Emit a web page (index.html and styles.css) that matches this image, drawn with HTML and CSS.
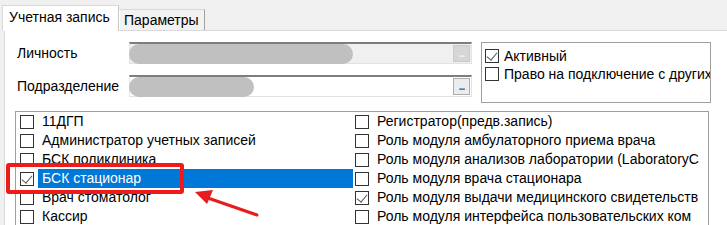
FILE: index.html
```html
<!DOCTYPE html>
<html lang="ru">
<head>
<meta charset="utf-8">
<link rel="stylesheet" href="styles.css">
</head>
<body>
<div class="window">
  <div class="tabs">
    <div class="tab active">Учетная запись</div>
    <div class="tab">Параметры</div>
  </div>
  <div class="panel">
    <div class="top">
      <div class="fields">
        <div class="field-row">
          <span class="label">Личность</span>
          <div class="input disabled">
            <span class="blur" style="width:224px"></span>
            <span class="btn">...</span>
          </div>
        </div>
        <div class="field-row">
          <span class="label">Подразделение</span>
          <div class="input">
            <span class="blur" style="width:125px"></span>
            <span class="btn">...</span>
          </div>
        </div>
      </div>
      <div class="group">
        <div class="check-row"><span class="cb checked"></span><span>Активный</span></div>
        <div class="check-row"><span class="cb"></span><span>Право на подключение с других</span></div>
      </div>
    </div>
    <div class="list">
      <div class="col col1">
        <div class="item"><span class="cb"></span><span class="txt">11ДГП</span></div>
        <div class="item"><span class="cb"></span><span class="txt">Администратор учетных записей</span></div>
        <div class="item"><span class="cb"></span><span class="txt">БСК поликлиника</span></div>
        <div class="item selected"><span class="cb checked"></span><span class="txt">БСК стационар</span></div>
        <div class="item"><span class="cb"></span><span class="txt">Врач стоматолог</span></div>
        <div class="item"><span class="cb"></span><span class="txt">Кассир</span></div>
      </div>
      <div class="col col2">
        <div class="item"><span class="cb"></span><span class="txt">Регистратор(предв.запись)</span></div>
        <div class="item"><span class="cb"></span><span class="txt">Роль модуля амбулаторного приема врача</span></div>
        <div class="item"><span class="cb"></span><span class="txt">Роль модуля анализов лаборатории (LaboratoryC</span></div>
        <div class="item"><span class="cb"></span><span class="txt">Роль модуля врача стационара</span></div>
        <div class="item"><span class="cb checked"></span><span class="txt">Роль модуля выдачи медицинского свидетельств</span></div>
        <div class="item"><span class="cb"></span><span class="txt">Роль модуля интерфейса пользовательских ком</span></div>
      </div>
    </div>
  </div>
  <div class="highlight-box"></div>
  <svg class="arrow" width="90" height="40" viewBox="0 0 90 40">
    <line x1="14" y1="11" x2="66" y2="29" stroke="#e81c1c" stroke-width="3" stroke-linecap="round"/>
    <polygon points="4,6 22,4 16,18" fill="#e81c1c"/>
  </svg>
</div>
</body>
</html>
```
FILE: styles.css
```css
* { box-sizing: border-box; }
html, body { margin: 0; padding: 0; }
body {
  background: #f0f0f0;
  font-family: "Liberation Sans", Arial, sans-serif;
  font-size: 14px;
  color: #000;
  width: 727px;
  height: 225px;
  overflow: hidden;
}
.window { position: relative; height: 225px; }
.tabs {
  display: flex;
  align-items: flex-end;
  height: 30px;
  padding-left: 2px;
}
.tab {
  height: 21px;
  padding: 2px 5px 0;
  border: 1px solid #d9d9d9;
  border-right-color: #a0a0a0;
  border-bottom: none;
  background: #f2f2f2;
  line-height: 17px;
  white-space: nowrap;
}
.tab.active {
  height: 26px;
  background: #fff;
  padding: 3px 5px 0 6px;
  margin-bottom: -1px;
  position: relative;
  z-index: 1;
  width: 117px;
  border-right-color: #c8c8c8;
}
.tab:not(.active) { width: 86px; border-left-color: #fff; padding-left: 4px; }
.panel {
  background: #fff;
  border-top: 1px solid #d9d9d9;
  border-left: 1px solid #d9d9d9;
  margin-left: 4px;
  height: 195px;
  padding-top: 11px;
}
.top { display: flex; height: 68px; }
.fields {
  display: flex;
  flex-direction: column;
  gap: 11px;
  padding-left: 12px;
  width: 476px;
}
.field-row { display: flex; align-items: center; height: 22px; }
.label { width: 112px; }
.input {
  width: 343px;
  height: 22px;
  border: 1px solid #e3e3e3;
  border-top: 2px solid #7d7d7d;
  background: #fff;
  display: flex;
  align-items: center;
  justify-content: space-between;
}
.input.disabled { background: #f0f0f0; }
.blur {
  height: 20px;
  background: #c0c0c0;
  border-radius: 10px;
  margin-left: -1px;
}
.btn {
  width: 17px;
  height: 17px;
  margin-right: 1px;
  border: 1px solid #adadad;
  background: #ececec;
  font-size: 10px;
  line-height: 10px;
  padding-top: 3px;
  text-align: center;
  color: #3a5a9a;
  font-weight: bold;
  letter-spacing: -1px;
}
.input.disabled .btn { background: #d6d6d6; border-color: #cacaca; color: #f4f4f4; }
.group {
  width: 230px;
  height: 61px;
  border: 1px solid #a0a0a0;
  padding: 4px 0 0 3px;
  overflow: hidden;
  white-space: nowrap;
}
.check-row { display: flex; align-items: center; height: 18px; gap: 5px; }
.cb {
  width: 14px;
  height: 14px;
  border: 1px solid #333;
  background: #fff;
  flex: none;
  position: relative;
}
.cb.checked::after {
  content: "";
  position: absolute;
  left: 3px;
  top: 0px;
  width: 5px;
  height: 9px;
  border-right: 1.5px solid #555;
  border-bottom: 1.5px solid #555;
  transform: rotate(40deg);
}
.list {
  margin: 1px 0 0 10px;
  width: 694px;
  height: 120px;
  border: 1px solid #a0a0a0;
  display: flex;
  padding: 0 0 0 4px;
  overflow: hidden;
}
.col { flex: none; }
.col1 { width: 335px; }
.col2 { width: 350px; overflow: hidden; }
.item { display: flex; align-items: center; height: 19px; white-space: nowrap; }
.item .cb { margin-right: 4px; }
.item .txt { padding: 0 4px; line-height: 19px; }
.item.selected .txt {
  background: #0078d7;
  color: #fff;
  flex: 1;
  margin-right: 2px;
}
.highlight-box {
  position: absolute;
  left: 6px;
  top: 163px;
  width: 178px;
  height: 31px;
  border: 4px solid #ee1b1b;
  border-radius: 3px;
}
.arrow {
  position: absolute;
  left: 191px;
  top: 186px;
}
```
